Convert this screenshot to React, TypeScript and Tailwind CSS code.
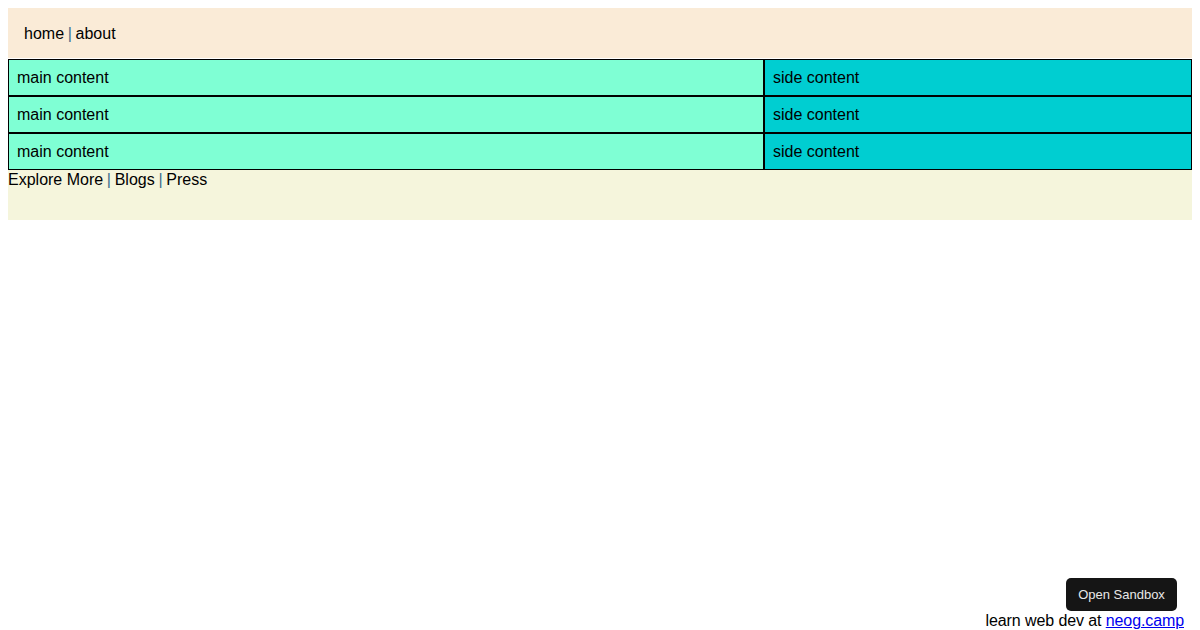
const rows = [0, 1, 2];

function Sep() {
  return <span className="mx-[-0.75px] text-[#3a6d8c]">|</span>;
}

export default function App() {
  return (
    <div className="relative h-[630px] bg-white p-2 text-black [font-family:'Liberation_Sans',Arial,sans-serif] text-base">
      <header className="flex h-[50px] items-center bg-[#FAEBD7] px-4 pt-[2px]">
        <span>
          home <Sep /> about
        </span>
      </header>

      <div className="mt-px">
        {rows.map((i) => (
          <div key={i} className="flex">
            <div className="flex h-[37px] w-[756px] items-center border border-black bg-[#7FFFD4] px-2">
              main content
            </div>
            <div className="flex h-[37px] flex-1 items-center border border-black bg-[#00CED1] px-2">
              side content
            </div>
          </div>
        ))}
      </div>

      <footer className="h-[50px] bg-[#F5F5DC] leading-[20px]">
        Explore More <Sep /> Blogs <Sep /> Press
      </footer>

      <button
        type="button"
        className="absolute right-[23px] top-[578px] h-[33px] w-[111px] rounded-[5px] bg-[#151515] text-[13px] text-[#e8e8e8]"
      >
        Open Sandbox
      </button>
      <p className="absolute right-4 top-[612px] leading-[18px] tracking-[-0.1px]">
        learn web dev at{" "}
        <a href="#" className="text-[#0000EE] underline">
          neog.camp
        </a>
      </p>
    </div>
  );
}
